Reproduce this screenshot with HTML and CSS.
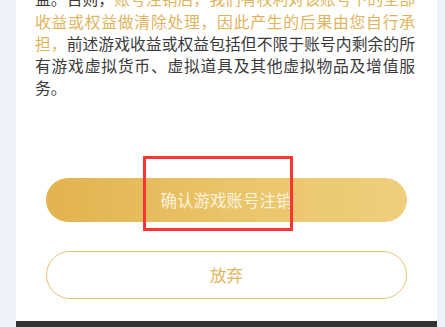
FILE: index.html
```html
<!DOCTYPE html>
<html lang="zh-CN">
<head>
<meta charset="utf-8">
<title>确认游戏账号注销</title>
<link rel="stylesheet" href="styles.css">
</head>
<body>
<div class="page">
  <div class="card">
    <p class="notice">益。否则，<span class="hl">账号注销后，我们有权利对该账号下的全部收益或权益做清除处理，因此产生的后果由您自行承担，</span>前述游戏收益或权益包括但不限于账号内剩余的所有游戏虚拟货币、虚拟道具及其他虚拟物品及增值服务。</p>
    <div class="actions">
      <button class="btn btn-primary">确认游戏账号注销</button>
      <button class="btn btn-ghost">放弃</button>
    </div>
    <div class="bottom-bar"></div>
  </div>
</div>
<div class="annotation"></div>
</body>
</html>
```
FILE: styles.css
```css
html, body {
  margin: 0;
  padding: 0;
}
body {
  width: 445px;
  height: 327px;
  overflow: hidden;
  background: #eef2fa;
  font-family: "Noto Sans CJK SC", "Noto Sans", sans-serif;
  position: relative;
}
.page {
  padding: 0 8px 0 16px;
  height: 327px;
}
.card {
  background: #ffffff;
  height: 327px;
  display: flex;
  flex-direction: column;
}
.notice {
  margin: -11.6px 0 0 0;
  padding: 0 22px 0 19px;
  font-size: 15.8px;
  line-height: 22.2px;
  color: #3a3a3a;
  text-align: justify;
}
.hl {
  color: #dfb45c;
}
.actions {
  margin-top: 79px;
  display: flex;
  flex-direction: column;
  align-items: center;
  gap: 28.5px;
}
.btn {
  width: 361px;
  border-radius: 24px;
  font-family: "Noto Sans CJK SC", "Noto Sans", sans-serif;
  font-size: 16.5px;
  padding: 0;
  cursor: pointer;
}
.btn-primary {
  height: 44px;
  border: none;
  background: linear-gradient(90deg, #e2b34f 0%, #e9c468 50%, #efcf7e 100%);
  color: #fdf3dc;
}
.btn-ghost {
  height: 48px;
  border: 1.5px solid #e6c374;
  background: #ffffff;
  color: #dfb660;
}
.bottom-bar {
  margin-top: auto;
  height: 6px;
  background: #333333;
}
.annotation {
  position: absolute;
  left: 143px;
  top: 156px;
  width: 144px;
  height: 69px;
  border: 3px solid #ff3535;
}
```
